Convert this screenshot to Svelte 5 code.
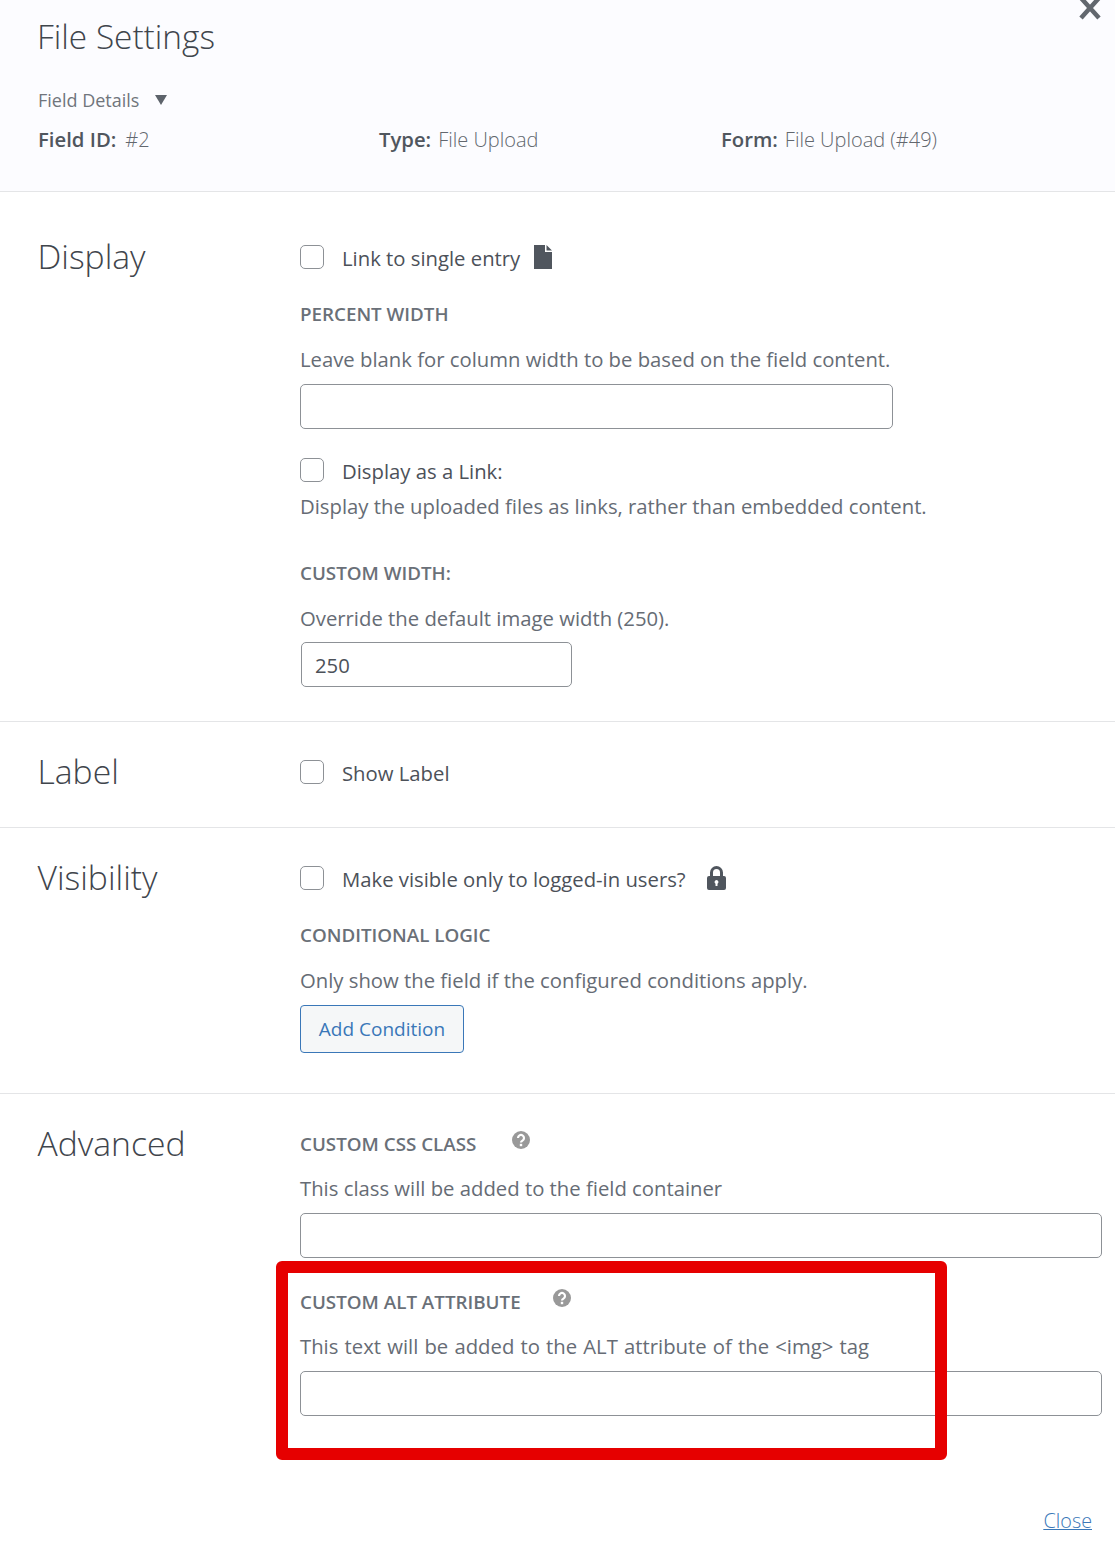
<script>
  const details = [
    { label: 'Field ID:', value: '#2' },
    { label: 'Type:', value: 'File Upload' },
    { label: 'Form:', value: 'File Upload (#49)' }
  ];
</script>

<style>
  :global(body) { margin: 0; background: #fff; }
  .modal { position: relative; height: 1541px; overflow: hidden; font-family: "Open Sans", "Noto Sans", sans-serif; font-size: 20.3px; color: #666c75; }
  .head { height: 192px; box-sizing: border-box; background: #fcfcff; border-bottom: 1px solid #e4e5e7; padding: 11px 38px 0; }
  h1, h2 { margin: 0; font-weight: 300; color: #3f454c; }
  h1 { font-size: 33.4px; line-height: 50px; margin-left: -1px; }
  h2 { font-size: 33.7px; line-height: 50px; margin: -1px 0 0 -0.5px; }
  .toggle { display: flex; align-items: center; gap: 16px; margin-top: 27px; font-size: 18px; line-height: 24px; color: #70757c; }
  .toggle i { width: 0; height: 0; border-left: 6px solid transparent; border-right: 6px solid transparent; border-top: 10px solid #5d636b; }
  .meta { display: grid; grid-template-columns: 341px 342px 1fr; margin-top: 13px; line-height: 28px; }
  .meta b { font-weight: 600; color: #50565e; margin-right: 7px; }
  .meta div:first-child b { margin-right: 9px; }
  .meta span { font-size: 20px; font-weight: 300; color: #62676e; }
  .close-x { position: absolute; right: 13px; top: -3px; }
  section { display: grid; grid-template-columns: 262px 1fr; padding: 0 13px 0 38px; border-bottom: 1px solid #e4e5e7; box-sizing: border-box; }
  section:last-of-type { border-bottom: 0; }
  .display { height: 530px; padding-top: 40px; }
  .label { height: 106px; padding-top: 25px; }
  .visibility { height: 266px; padding-top: 25px; }
  .advanced { padding-top: 25px; }
  .check { display: flex; align-items: center; height: 50px; box-sizing: border-box; padding-top: 2px; color: #4c5159; }
  .check .box { width: 22px; height: 22px; border: 1px solid #8d9196; border-radius: 5px; margin: -2px 18px 0 0; }
  .check svg { margin: -2px 0 0 14px; }
  .check svg.lock { margin-left: 21px; }
  .cap { display: flex; align-items: center; height: 28px; font-size: 18.8px; font-weight: 600; color: #6a7078; }
  .cap svg { margin: -8px 0 0 33px; }
  .gap-check { margin-top: 18px; }
  .gap-width { margin-top: 39px; }
  .gap-first { margin-top: 11px; }
  .gap-first svg { margin-left: 36px; }
  .gap-alt { margin-top: 30px; }
  .gap-alt svg { margin-left: 32px; }
  p { margin: 0; line-height: 28px; }
  .hint { margin-top: 17px; }
  .advanced .hint { margin-top: 16px; }
  .advanced .wide { word-spacing: 0.9px; }
  .sub { margin-top: -3px; }
  .input { height: 43px; border: 1px solid #8d9196; border-radius: 5px; margin-top: 10.5px; }
  .advanced .input { margin-top: 11px; }
  .w593 { width: 591px; }
  .w271 { width: 269px; margin-left: 1px; display: flex; align-items: center; color: #4c5159; }
  .w271 span { margin-left: 13px; }
  .link-row { margin-top: 16px; }
  button { display: block; margin-top: 10.5px; width: 164px; height: 48px; box-sizing: border-box; border: 1px solid #3a77b8; border-radius: 4px; background: #f5f7f8; color: #3a77b8; font: inherit; font-size: 19px; }
  .callout { position: absolute; left: 276px; top: 1261px; width: 671px; height: 199px; box-sizing: border-box; border: 12px solid #e60000; border-radius: 6px; pointer-events: none; }
  .close { position: absolute; right: 23px; top: 1507px; font-size: 19.8px; font-weight: 300; color: #3a77b8; line-height: 28px; }
</style>

<div class="modal">
  <div class="head">
    <h1>File Settings</h1>
    <div class="toggle">Field Details <i></i></div>
    <div class="meta">
      {#each details as d}
        <div><b>{d.label}</b><span>{d.value}</span></div>
      {/each}
    </div>
  </div>
  <svg class="close-x" width="24" height="24" viewBox="0 0 24 24"><path d="M3 1 L21 21 M21 1 L3 21" stroke="#62676e" stroke-width="4.5" fill="none"/></svg>

  <section class="display">
    <h2>Display</h2>
    <div>
      <div class="check"><span class="box"></span>Link to single entry
        <svg width="18" height="24" viewBox="0 0 18 24"><path d="M0 0H11V7H18V24H0Z M12.5 0 18 5.500H12.500Z" fill="#50565e"/></svg>
      </div>
      <div class="cap gap-check">PERCENT WIDTH</div>
      <p class="hint">Leave blank for column width to be based on the field content.</p>
      <div class="input w593"></div>
      <div class="check link-row"><span class="box"></span>Display as a Link:</div>
      <p class="sub">Display the uploaded files as links, rather than embedded content.</p>
      <div class="cap gap-width">CUSTOM WIDTH:</div>
      <p class="hint">Override the default image width (250).</p>
      <div class="input w271"><span>250</span></div>
    </div>
  </section>

  <section class="label">
    <h2>Label</h2>
    <div class="check"><span class="box"></span>Show Label</div>
  </section>

  <section class="visibility">
    <h2>Visibility</h2>
    <div>
      <div class="check"><span class="box"></span>Make visible only to logged-in users?
        <svg class="lock" width="19" height="24" viewBox="0 0 19 24"><path fill-rule="evenodd" d="M3 10V6.500a6.500 6.500 0 0 1 13 0V10h1a2 2 0 0 1 2 2v10a2 2 0 0 1-2 2H2a2 2 0 0 1-2-2V12a2 2 0 0 1 2-2ZM6 10h7V6.500a3.500 3.500 0 0 0-7 0ZM9.500 14a2 2 0 0 0-1 3.700V20h2v-2.300a2 2 0 0 0-1-3.700Z" fill="#50565e"/></svg>
      </div>
      <div class="cap gap-check">CONDITIONAL LOGIC</div>
      <p class="hint">Only show the field if the configured conditions apply.</p>
      <button>Add Condition</button>
    </div>
  </section>

  <section class="advanced">
    <h2>Advanced</h2>
    <div>
      <div class="cap gap-first">CUSTOM CSS CLASS
        <svg width="18" height="18" viewBox="0 0 18 18"><circle cx="9" cy="9" r="9" fill="#999"/><path d="M6 7a3 3 0 1 1 4.500 2.600C9.500 10.200 9 10.600 9 11.500" stroke="#fff" stroke-width="2.200" fill="none"/><rect x="7.800" y="12.800" width="2.400" height="2.400" fill="#fff"/></svg>
      </div>
      <p class="hint">This class will be added to the field container</p>
      <div class="input"></div>
      <div class="cap gap-alt">CUSTOM ALT ATTRIBUTE
        <svg width="18" height="18" viewBox="0 0 18 18"><circle cx="9" cy="9" r="9" fill="#999"/><path d="M6 7a3 3 0 1 1 4.500 2.600C9.500 10.200 9 10.600 9 11.500" stroke="#fff" stroke-width="2.200" fill="none"/><rect x="7.800" y="12.800" width="2.400" height="2.400" fill="#fff"/></svg>
      </div>
      <p class="hint wide">This text will be added to the ALT attribute of the &lt;img&gt; tag</p>
      <div class="input"></div>
    </div>
  </section>

  <div class="callout"></div>
  <a class="close" href="#close"><u>Close</u></a>
</div>
